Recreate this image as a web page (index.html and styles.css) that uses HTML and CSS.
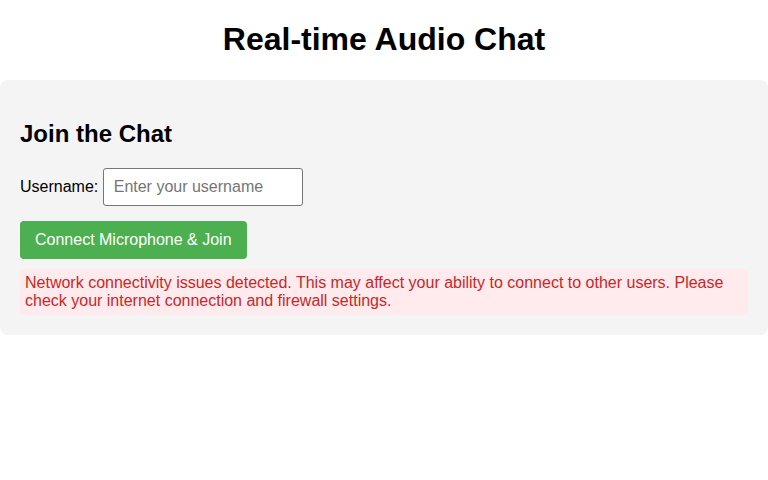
FILE: index.html
```html
<!DOCTYPE html>
<html lang="en">

<head>
    <meta charset="UTF-8">
    <title>Real-time Audio Chat</title>
    <link rel="stylesheet" href="styles.css">
</head>

<body>
    <h1>Real-time Audio Chat</h1>

    <div class="join_panel">
        <h2>Join the Chat</h2>
        <div class="form_row">
            <label for="username">Username:</label>
            <input type="text" id="username" placeholder="Enter your username">
        </div>
        <button id="btn_join">Connect Microphone &amp; Join</button>
        <div class="error">Network connectivity issues detected. This may affect your ability to connect to other users. Please check your internet connection and firewall settings.</div>
    </div>
</body>

</html>
```

FILE: styles.css
```css
body {
    margin: 0;
    font-family: "Liberation Sans", Arial, sans-serif;
    color: #000;
    background-color: white;
}

h1 {
    text-align: center;
    font-size: 32px;
    margin: 21.44px 0;
}

.join_panel {
    background-color: #f4f4f4;
    border-radius: 8px;
    padding: 20px;
}

.join_panel h2 {
    font-size: 24px;
    margin: 19.92px 0;
}

.form_row {
    margin-bottom: 15px;
    font-size: 16px;
}

#username {
    width: 200px;
    height: 38px;
    box-sizing: border-box;
    padding: 8px 10px;
    font-size: 16px;
    font-family: "Liberation Sans", Arial, sans-serif;
    border: 1px solid #767676;
    border-radius: 3px;
    vertical-align: middle;
}

#username::placeholder {
    color: #757575;
}

.form_row label {
    vertical-align: middle;
}

#btn_join {
    height: 38px;
    padding: 0 15px;
    font-size: 16px;
    font-family: "Liberation Sans", Arial, sans-serif;
    color: white;
    background-color: #4CAF50;
    border: none;
    border-radius: 4px;
    cursor: pointer;
}

.error {
    margin-top: 10px;
    padding: 5px;
    color: #c62828;
    background-color: #ffebee;
    font-size: 16px;
    line-height: 18px;
}
```
